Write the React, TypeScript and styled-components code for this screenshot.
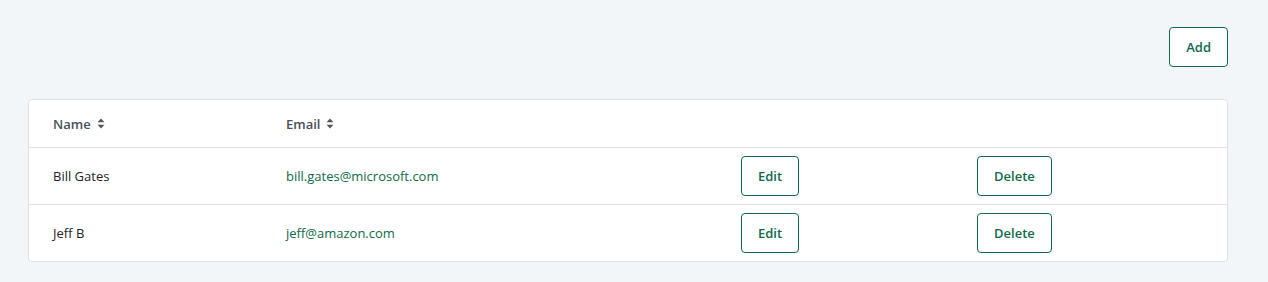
import React from 'react';
import styled, { createGlobalStyle } from 'styled-components';

type User = { name: string; email: string };

const users: User[] = [
  { name: 'Bill Gates', email: 'bill.gates@microsoft.com' },
  { name: 'Jeff B', email: 'jeff@amazon.com' },
];

const GlobalStyle = createGlobalStyle`
  * { box-sizing: border-box; }
  body {
    margin: 0;
    background: #f3f6f9;
    font-family: 'Open Sans', 'Noto Sans', sans-serif;
    font-size: 13px;
    color: #212529;
  }
`;

const SortIcon = () => (
  <svg width="8" height="11" viewBox="0 0 8 11" fill="#555">
    <path d="M0.5 4.2 L4 0.5 L7.5 4.2 Z" />
    <path d="M0.5 6.8 L4 10.5 L7.5 6.8 Z" />
  </svg>
);

const App = () => (
  <>
    <GlobalStyle />
    <Page>
      <Toolbar>
        <Button>Add</Button>
      </Toolbar>
      <Card>
        <HeaderRow>
          <HeadCell>
            Name <SortIcon />
          </HeadCell>
          <HeadCell>
            Email <SortIcon />
          </HeadCell>
          <HeadCell />
          <HeadCell />
        </HeaderRow>
        {users.map((u) => (
          <Row key={u.email}>
            <Cell>{u.name}</Cell>
            <Cell green>{u.email}</Cell>
            <Cell>
              <Button>Edit</Button>
            </Cell>
            <Cell>
              <Button>Delete</Button>
            </Cell>
          </Row>
        ))}
      </Card>
    </Page>
  </>
);

export default App;

const Page = styled.div`
  padding: 27px 40px 20px 28px;
`;

const Toolbar = styled.div`
  display: flex;
  justify-content: flex-end;
  margin-bottom: 32px;
`;

const Button = styled.button`
  height: 40px;
  padding: 0 16px;
  background: #fff;
  border: 1px solid #0e6b47;
  border-radius: 4px;
  color: #0e6b47;
  font-family: inherit;
  font-size: 13px;
  font-weight: 600;
  cursor: pointer;
`;

const Card = styled.div`
  background: #fff;
  border: 1px solid #dde1e6;
  border-radius: 4px;
`;

const Grid = styled.div`
  display: grid;
  grid-template-columns: 233px 455px 236px 1fr;
  align-items: center;
`;

const HeaderRow = styled(Grid)`
  height: 47px;
`;

const Row = styled(Grid)`
  height: 57px;
  border-top: 1px solid #dde1e6;
`;

const HeadCell = styled.div`
  display: flex;
  align-items: center;
  gap: 6px;
  padding-left: 24px;
  font-weight: 600;
  color: #4b4f56;
`;

const Cell = styled.div<{ green?: boolean }>`
  padding-left: 24px;
  color: ${({ green }) => (green ? '#0e6b47' : '#212529')};
`;
